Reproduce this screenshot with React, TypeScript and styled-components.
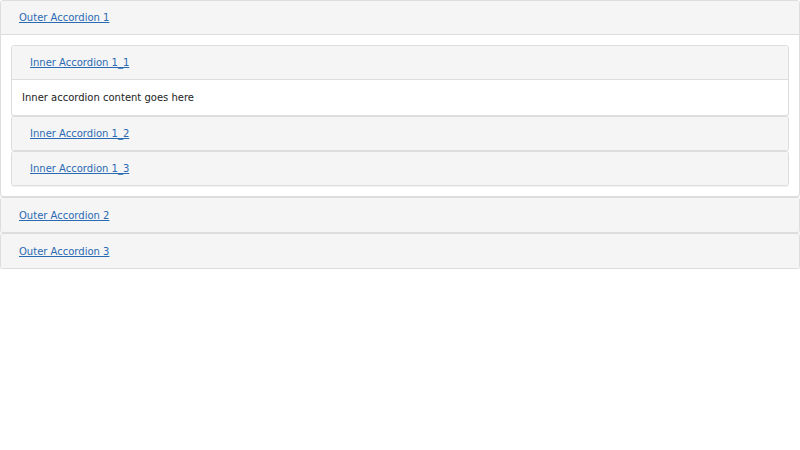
import React, { useState } from "react";
import styled, { createGlobalStyle } from "styled-components";

const Global = createGlobalStyle`
  html, body { margin: 0; padding: 0; background: #fff; }
  body { font-family: "DejaVu Sans", Verdana, sans-serif; font-size: 10px; color: #222; }
`;

const Group = styled.div`
  display: flex;
  flex-direction: column;
`;

const Panel = styled.div`
  border: 1px solid #ddd;
  border-radius: 3px;
  background: #fff;
  box-shadow: 0 1px 1px rgba(0, 0, 0, 0.06);
  overflow: hidden;
`;

const Heading = styled.div<{ $open: boolean; $h: number }>`
  height: ${(p) => p.$h}px;
  display: flex;
  align-items: center;
  padding: 0 18px;
  background: #f5f5f5;
  border-bottom: ${(p) => (p.$open ? "1px solid #ddd" : "none")};
`;

const Link = styled.a`
  color: #2a6ab3;
  text-decoration: underline;
  font-size: 10px;
  cursor: pointer;
`;

const Body = styled.div<{ $pad: string }>`
  padding: ${(p) => p.$pad};
`;

const Content = styled.div`
  height: 35px;
  display: flex;
  align-items: center;
  padding: 0 10px;
  color: #222;
`;

function Inner() {
  const [open, setOpen] = useState(0);
  const items = ["Inner Accordion 1_1", "Inner Accordion 1_2", "Inner Accordion 1_3"];
  return (
    <Group>
      {items.map((t, i) => (
        <Panel key={t}>
          <Heading $open={open === i} $h={33}>
            <Link onClick={() => setOpen(i)}>{t}</Link>
          </Heading>
          {open === i && <Content>Inner accordion content goes here</Content>}
        </Panel>
      ))}
    </Group>
  );
}

export default function App() {
  const [open, setOpen] = useState(0);
  const items = ["Outer Accordion 1", "Outer Accordion 2", "Outer Accordion 3"];
  return (
    <>
      <Global />
      <Group>
        {items.map((t, i) => (
          <Panel key={t}>
            <Heading $open={open === i} $h={open === i ? 33 : 34}>
              <Link onClick={() => setOpen(i)}>{t}</Link>
            </Heading>
            {open === i && (
              <Body $pad="10px 10px 10px 10px">
                <Inner />
              </Body>
            )}
          </Panel>
        ))}
      </Group>
    </>
  );
}
